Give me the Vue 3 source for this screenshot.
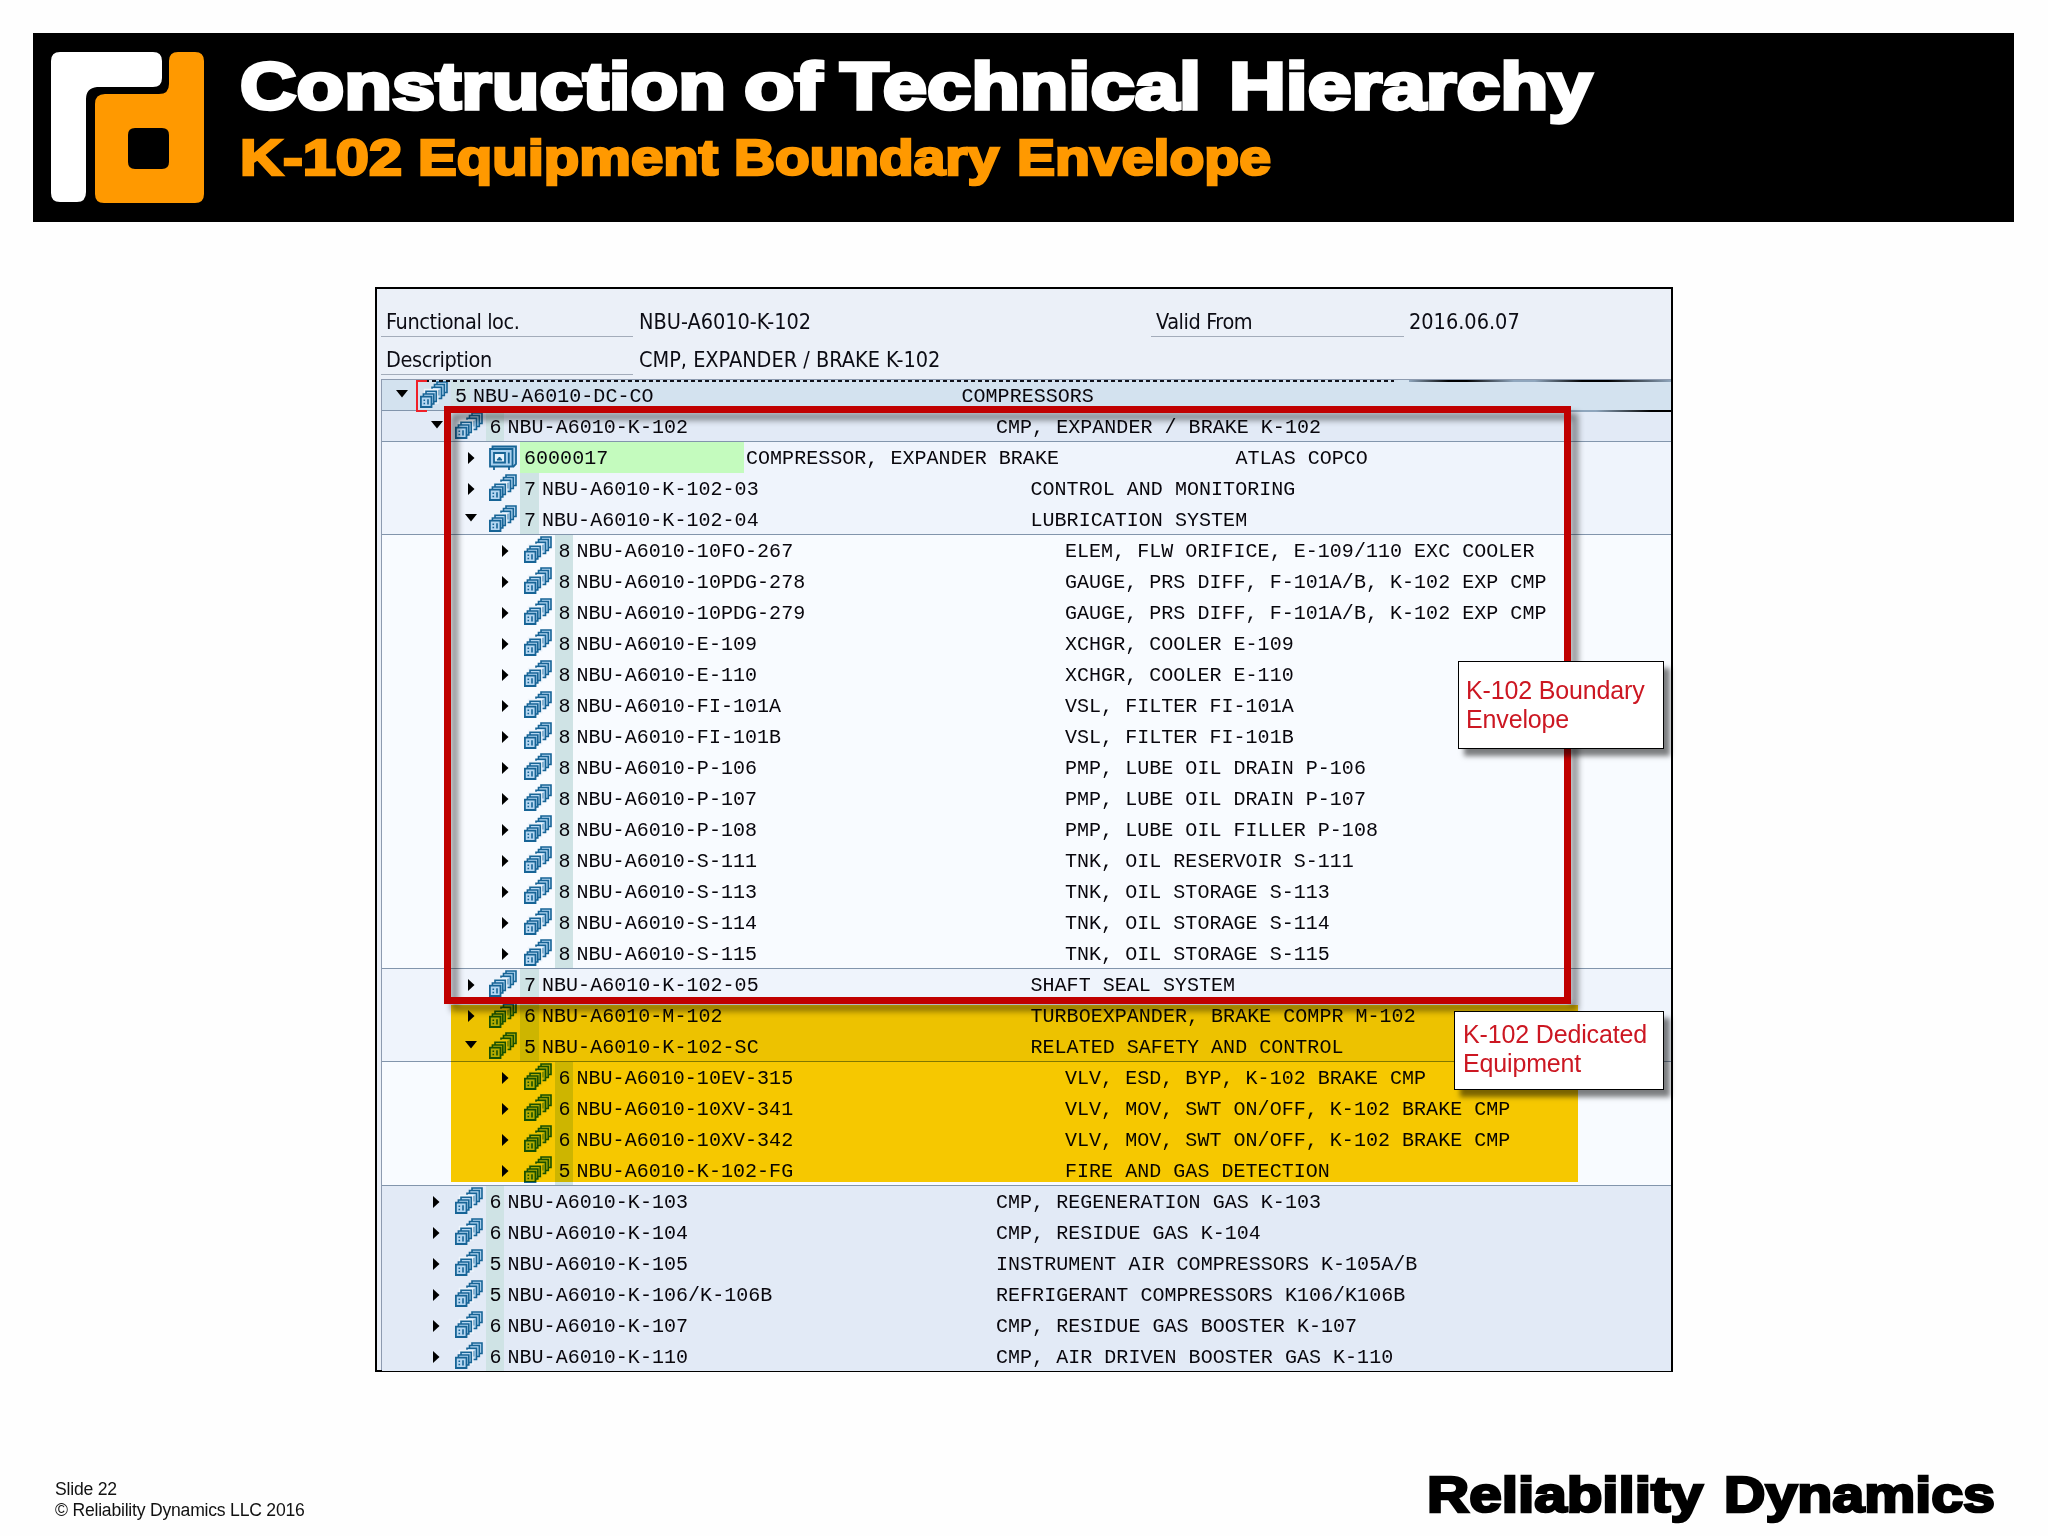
<script setup>
import {computed} from "vue";

// word, x, drawn width
const title = [
  ['Construction', 207, 486],
  ['of', 711, 78],
  ['Technical', 807, 361],
  ['Hierarchy', 1196, 363],
]

const subtitle = [
  ['K-102', 207, 162],
  ['Equipment', 385, 300],
  ['Boundary', 701, 265],
  ['Envelope', 984, 254],
]

// depth, level, name, description, open, row background
const nodes = [
  [0, 5, 'NBU-A6010-DC-CO', 'COMPRESSORS', true, 'root'],
  [1, 6, 'NBU-A6010-K-102', 'CMP, EXPANDER / BRAKE K-102', true, 'second'],
  [2, null, '6000017', 'COMPRESSOR, EXPANDER BRAKE', false, 'third'],
  [2, 7, 'NBU-A6010-K-102-03', 'CONTROL AND MONITORING', false, 'third'],
  [2, 7, 'NBU-A6010-K-102-04', 'LUBRICATION SYSTEM', true, 'third'],
  [3, 8, 'NBU-A6010-10FO-267', 'ELEM, FLW ORIFICE, E-109/110 EXC COOLER', false, 'leaf'],
  [3, 8, 'NBU-A6010-10PDG-278', 'GAUGE, PRS DIFF, F-101A/B, K-102 EXP CMP', false, 'leaf'],
  [3, 8, 'NBU-A6010-10PDG-279', 'GAUGE, PRS DIFF, F-101A/B, K-102 EXP CMP', false, 'leaf'],
  [3, 8, 'NBU-A6010-E-109', 'XCHGR, COOLER E-109', false, 'leaf'],
  [3, 8, 'NBU-A6010-E-110', 'XCHGR, COOLER E-110', false, 'leaf'],
  [3, 8, 'NBU-A6010-FI-101A', 'VSL, FILTER FI-101A', false, 'leaf'],
  [3, 8, 'NBU-A6010-FI-101B', 'VSL, FILTER FI-101B', false, 'leaf'],
  [3, 8, 'NBU-A6010-P-106', 'PMP, LUBE OIL DRAIN P-106', false, 'leaf'],
  [3, 8, 'NBU-A6010-P-107', 'PMP, LUBE OIL DRAIN P-107', false, 'leaf'],
  [3, 8, 'NBU-A6010-P-108', 'PMP, LUBE OIL FILLER P-108', false, 'leaf'],
  [3, 8, 'NBU-A6010-S-111', 'TNK, OIL RESERVOIR S-111', false, 'leaf'],
  [3, 8, 'NBU-A6010-S-113', 'TNK, OIL STORAGE S-113', false, 'leaf'],
  [3, 8, 'NBU-A6010-S-114', 'TNK, OIL STORAGE S-114', false, 'leaf'],
  [3, 8, 'NBU-A6010-S-115', 'TNK, OIL STORAGE S-115', false, 'leaf'],
  [2, 7, 'NBU-A6010-K-102-05', 'SHAFT SEAL SYSTEM', false, 'third'],
  [2, 6, 'NBU-A6010-M-102', 'TURBOEXPANDER, BRAKE COMPR M-102', false, 'third'],
  [2, 5, 'NBU-A6010-K-102-SC', 'RELATED SAFETY AND CONTROL', true, 'third'],
  [3, 6, 'NBU-A6010-10EV-315', 'VLV, ESD, BYP, K-102 BRAKE CMP', false, 'leaf'],
  [3, 6, 'NBU-A6010-10XV-341', 'VLV, MOV, SWT ON/OFF, K-102 BRAKE CMP', false, 'leaf'],
  [3, 6, 'NBU-A6010-10XV-342', 'VLV, MOV, SWT ON/OFF, K-102 BRAKE CMP', false, 'leaf'],
  [3, 5, 'NBU-A6010-K-102-FG', 'FIRE AND GAS DETECTION', false, 'leaf'],
  [1, 6, 'NBU-A6010-K-103', 'CMP, REGENERATION GAS K-103', false, 'second'],
  [1, 6, 'NBU-A6010-K-104', 'CMP, RESIDUE GAS K-104', false, 'second'],
  [1, 5, 'NBU-A6010-K-105', 'INSTRUMENT AIR COMPRESSORS K-105A/B', false, 'second'],
  [1, 5, 'NBU-A6010-K-106/K-106B', 'REFRIGERANT COMPRESSORS K106/K106B', false, 'second'],
  [1, 6, 'NBU-A6010-K-107', 'CMP, RESIDUE GAS BOOSTER K-107', false, 'second'],
  [1, 6, 'NBU-A6010-K-110', 'CMP, AIR DRIVEN BOOSTER GAS K-110', false, 'second'],
]

const rows = computed(() => nodes.map(([depth, level, name, text, open, tone], i) => ({
  depth, level, name, text, open, tone,
  // a rule is drawn wherever the next row changes tone
  ruled: i < nodes.length - 1 && nodes[i + 1][5] !== tone,
})))
</script>

<template>
  <div class="slide">

    <header class="banner">
      <svg class="logo" width="154" height="153" viewBox="0 0 154 153">
        <path fill="#fff" d="M9 0H102Q111 0 111 9V26Q111 35 102 35H46Q35 36 35 47V140Q35 150 26 150H9Q0 150 0 141V9Q0 0 9 0Z"/>
        <path fill="#ff9900" fill-rule="evenodd" d="M127 0H144Q153 0 153 9V142Q153 151 144 151H53Q44 151 44 142V52Q44 42 54 42H108Q118 42 118 32V9Q118 0 127 0ZM84 76Q77 76 77 83V110Q77 117 84 117H111Q118 117 118 110V83Q118 76 111 76Z"/>
      </svg>
      <svg class="titles" width="1700" height="189">
        <text v-for="[word, x, width] in title" :key="word" class="heavy title" :x="x" y="75.5"
              :textLength="width" lengthAdjust="spacingAndGlyphs">{{ word }}</text>
        <text v-for="[word, x, width] in subtitle" :key="word" class="heavy subtitle" :x="x" y="141.5"
              :textLength="width" lengthAdjust="spacingAndGlyphs">{{ word }}</text>
      </svg>
    </header>

    <main class="panel">
      <div class="form">
        <div class="form_row">
          <span class="label wide">Functional loc.</span>
          <span class="value">NBU-A6010-K-102</span>
          <span class="label narrow">Valid From</span>
          <span class="value date">2016.06.07</span>
        </div>
        <div class="form_row">
          <span class="label wide">Description</span>
          <span class="value">CMP, EXPANDER / BRAKE K-102</span>
        </div>
      </div>

      <div class="tree">
        <div v-for="row in rows" :key="row.name" class="row" :class="[row.tone, {ruled: row.ruled}]"
             :style="{paddingLeft: row.depth * 34.5 + 'px'}">
          <div class="arrow">
            <svg v-if="row.open" width="12" height="8" viewBox="0 0 12 8"><path d="M0 0H12L6 7.5Z"/></svg>
            <svg v-else width="7" height="12" viewBox="0 0 7 12"><path d="M0 0L6.5 6L0 12Z"/></svg>
          </div>

          <svg v-if="row.level" class="icon" width="28" height="28" viewBox="0 0 28 28">
            <g fill="#b4d6f1" stroke="#176496" stroke-width="1.6">
              <path d="M17 1H27V11.5H17Z"/>
              <path d="M14.5 3.5H24.3V14.5H14.5Z"/>
              <path d="M12 6.2H21.5V17.5H12Z"/>
              <path d="M18.500 9V14.500"/>
              <path d="M6 10H16.300V20.500H6Z" fill="none" stroke="#eef4fb" stroke-width="4.500"/>
              <path d="M6 10.300H16.300V20.500H6Z"/>
              <path d="M3.400 13H13.800V23H3.400Z"/>
              <path d="M0.900 15.700H11.500V26H0.900Z" stroke-width="1.800"/>
              <path d="M4.300 18.500V20M4.300 21.800V23.300M8 18.300V23.500"/>
            </g>
          </svg>
          <svg v-else class="icon" width="28" height="28" viewBox="0 0 28 28">
            <g fill="#a9d0ee" stroke="#176496" stroke-width="1.8">
              <path d="M3.500 6V3.500H27V21L24 24"/>
              <path d="M1 6H23.500V23.500H1Z"/>
              <path d="M5 10H16V19.500H5Z" fill="#e4f2fc"/>
              <path d="M19.800 9.500V20.500M5 24V27M20 24V27"/>
              <path d="M8 17L10.500 14L13 17Z" fill="#176496" stroke-width="1"/>
            </g>
          </svg>

          <template v-if="row.level">
            <span class="level">{{ row.level }}</span>
            <span class="name">{{ row.name }}</span>
            <span>{{ row.text }}</span>
          </template>
          <template v-else>
            <span class="equipment">{{ row.name }}</span>
            <span class="model">{{ row.text }}</span>
            <span>ATLAS COPCO</span>
          </template>
        </div>
      </div>

      <div class="focus_line"></div>
      <div class="focus_streak"></div>
      <div class="focus_streak lower"></div>
      <div class="focus_corner"></div>

      <div class="highlight"></div>
      <div class="boundary"></div>
      <div class="callout first">K-102 Boundary<br>Envelope</div>
      <div class="callout second_note">K-102 Dedicated<br>Equipment</div>
    </main>

    <footer class="footer">
      <div class="legal">Slide 22<br>© Reliability Dynamics LLC 2016</div>
      <svg class="brand" width="580" height="70">
        <text class="heavy" x="7" y="50" textLength="276" lengthAdjust="spacingAndGlyphs">Reliability</text>
        <text class="heavy" x="304" y="50" textLength="271" lengthAdjust="spacingAndGlyphs">Dynamics</text>
      </svg>
    </footer>

  </div>
</template>

<style>
body {
  margin: 0;
  background: #fff;
}
</style>

<style scoped>
.slide {
  width: 2048px;
  height: 1536px;
  display: flex;
  flex-direction: column;
  box-sizing: border-box;
  padding-top: 33px;
  background: #fefefe;
  overflow: hidden;
  font-family: "Liberation Sans", Arial, sans-serif;
}

.banner {
  display: flex;
  flex: none;
  width: 1981px;
  height: 189px;
  margin-left: 33px;
  background: #000;
}

.logo {
  flex: none;
  margin: 19px 0 0 18px;
}

.titles {
  flex: none;
  margin-left: -172px;
}

.heavy {
  font-family: "Liberation Sans", Arial, sans-serif;
  font-weight: bold;
  stroke-linejoin: miter;
}

.title {
  font-size: 67.5px;
  fill: #fff;
  stroke: #fff;
  stroke-width: 3.6px;
}

.subtitle {
  font-size: 50.5px;
  fill: #ff9900;
  stroke: #ff9900;
  stroke-width: 2.6px;
}

.panel {
  position: relative;
  flex: none;
  display: flex;
  flex-direction: column;
  box-sizing: border-box;
  width: 1298px;
  height: 1085px;
  margin: 65px 0 0 375px;
  border: 2px solid #000;
  background: #ebf0f8;
}

.form {
  flex: none;
  height: 90px;
  box-sizing: border-box;
  padding: 10px 0 0 4px;
  font-family: "DejaVu Sans Condensed", "DejaVu Sans", sans-serif;
  font-stretch: condensed;
  font-size: 21.5px;
  color: #0c0c14;
}

.form_row {
  display: flex;
  height: 38px;
  line-height: 46px;
  white-space: nowrap;
}

.label {
  flex: none;
  box-sizing: border-box;
  height: 38px;
  padding-left: 5px;
  border-bottom: 1px solid #a3acba;
  letter-spacing: -0.4px;
}

.wide {
  width: 252px;
}

.narrow {
  width: 253px;
}

.value {
  flex: none;
  width: 512px;
  padding-left: 6px;
}

.date {
  width: auto;
  padding-left: 5px;
}

.tree {
  flex: 1;
  min-height: 0;
  margin-left: 4px;
  border-left: 1px solid #8d9bb0;
  border-top: 1px solid #8d9bb0;
  font-family: "Liberation Mono", "Courier New", monospace;
  font-size: 20px;
  letter-spacing: 0.035px;
  color: #08060c;
  white-space: pre;
}

.row {
  display: flex;
  height: 31px;
  box-sizing: border-box;
  line-height: 34px;
}

.row:last-child {
  height: 30px;
}

.ruled {
  border-bottom: 1px solid #8295ac;
}

.root {
  background: #d3e2ef;
}

.second {
  background: #e2eaf6;
}

.third {
  background: #eff4fc;
}

.leaf {
  background: #f8fbff;
}

.arrow {
  flex: none;
  display: flex;
  justify-content: center;
  width: 12px;
  padding-top: 10px;
  margin: 0 12px 0 14px;
}

.icon {
  flex: none;
  margin: 1px 3px 0 0;
}

.level {
  flex: none;
  width: 18.5px;
  box-sizing: border-box;
  padding-left: 4px;
  background: #cfe3e5;
}

.root .level {
  background: #d0e3e6;
}

.name {
  flex: none;
  width: 488.5px;
  padding-left: 3.5px;
}

.equipment {
  flex: none;
  width: 224px;
  box-sizing: border-box;
  padding-left: 4px;
  background: #c4fbbe;
}

.model {
  flex: none;
  width: 489.5px;
  padding-left: 2px;
}

.focus_line {
  position: absolute;
  left: 48px;
  top: 91px;
  width: 969px;
  height: 2px;
  background: repeating-linear-gradient(90deg, #101018 0 4px, transparent 4px 7px);
}

.focus_streak {
  position: absolute;
  left: 1032px;
  top: 91px;
  width: 262px;
  height: 2px;
  background: linear-gradient(90deg, #8fa6bd 0%, #000 15%, #000 22%, #8fa6bd 40%, #8fa6bd 48%, #000 66%, #000 76%, #8fa6bd 100%);
}

.lower {
  left: 1194px;
  top: 121px;
  width: 100px;
  height: 2px;
  background: linear-gradient(90deg, #8fa6bd 25%, #000 80%);
}

.focus_corner {
  position: absolute;
  left: 39px;
  top: 91px;
  width: 9px;
  height: 28px;
  border: 2px solid #f02028;
  border-right: none;
}

.highlight {
  position: absolute;
  left: 74px;
  top: 716px;
  width: 1127px;
  height: 177px;
  background: #fdcb00;
  mix-blend-mode: multiply;
}

.boundary {
  position: absolute;
  left: 67px;
  top: 117px;
  width: 1113px;
  height: 584px;
  border: 7px solid #c00000;
  filter: drop-shadow(7px 7px 3px rgba(0, 0, 0, 0.45));
}

.callout {
  position: absolute;
  box-sizing: border-box;
  border: 1.5px solid #000;
  background: #fff;
  color: #cc1722;
  font-size: 25px;
  line-height: 29px;
  letter-spacing: -0.15px;
  white-space: nowrap;
  box-shadow: 6px 7px 5px rgba(0, 0, 0, 0.5);
}

.first {
  left: 1081px;
  top: 372px;
  width: 206px;
  height: 88px;
  padding: 14px 0 0 7px;
}

.second_note {
  left: 1077px;
  top: 721.5px;
  width: 210px;
  height: 79px;
  padding: 8px 0 0 8px;
}

.footer {
  display: flex;
  justify-content: space-between;
  align-items: flex-start;
  margin: 90px 48px 0 55px;
}

.legal {
  padding-top: 17px;
  font-size: 17.6px;
  line-height: 20.5px;
  letter-spacing: -0.22px;
  color: #111;
}

.brand text {
  font-size: 50.5px;
  stroke: #000;
  stroke-width: 2.6px;
}
</style>
